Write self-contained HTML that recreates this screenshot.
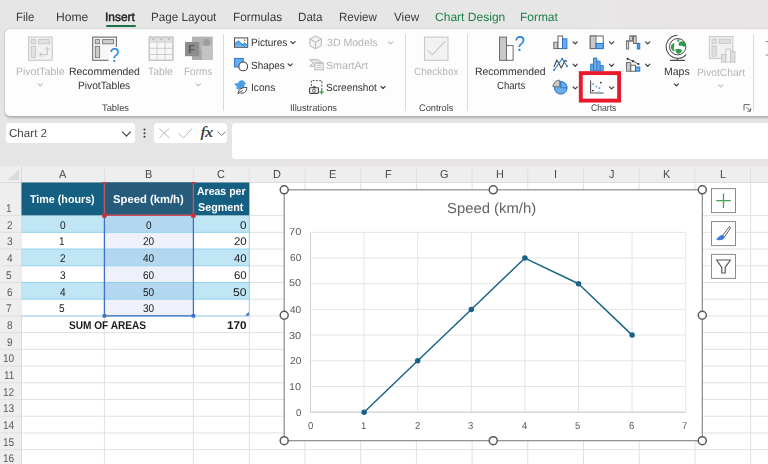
<!DOCTYPE html>
<html lang="en"><head><meta charset="utf-8"><title>Excel - Scatter chart</title>
<style>
html,body{margin:0;padding:0}
body{width:768px;height:464px;overflow:hidden;position:relative;background:linear-gradient(90deg,#e5e5e5 0,#e6e5e6 180px,#e8e4e6 330px,#e8e4e6 768px);font-family:"Liberation Sans",sans-serif}
.t{position:absolute;white-space:nowrap;line-height:1;transform-origin:0 50%;display:inline-block}
.abs{position:absolute}
#tabbar{left:0;top:0;width:768px;height:29px;background:linear-gradient(90deg,#e6e6e6 0,#e6e6e6 540px,#e8e5e6 640px,#e9e4e6 768px)}
#insul{left:105.5px;top:25px;width:30.5px;height:1.8px;background:#1e7145;border-radius:1px}
#ribbon{left:4.7px;top:28.5px;width:780px;height:87px;background:#fdfdfd;border-radius:5.5px;box-shadow:0 1.2px 2.5px rgba(0,0,0,.22),0 0 1.5px rgba(0,0,0,.12)}
.sep{position:absolute;top:34px;width:1px;height:77px;background:#dadada}
#namebox{left:5.5px;top:123px;width:129.5px;height:20.3px;background:#fff;border-radius:3.5px}
#fxbox{left:153.7px;top:123px;width:73.5px;height:20.3px;background:#fff;border-radius:3.5px}
#fbar{left:231.5px;top:123px;width:560px;height:36px;background:#fff;border-radius:4px}
#gfx{left:0;top:0;width:768px;height:464px}
svg{overflow:visible}
#texts{opacity:0.999}
#icons{opacity:0.999}

</style></head>
<body>
<div class="abs" id="tabbar"></div><div class="abs" id="insul"></div>
<div class="abs" id="ribbon"></div>
<div class="sep" style="left:223px"></div>
<div class="sep" style="left:405px"></div>
<div class="sep" style="left:467px"></div>
<div class="sep" style="left:753px"></div>
<div class="abs" id="namebox"></div><div class="abs" id="fxbox"></div><div class="abs" id="fbar"></div>
<svg class="abs" id="icons" style="left:0;top:0;width:768px;height:464px" viewBox="0 0 768 464" font-family="Liberation Sans, sans-serif">
<!-- PivotTable (disabled) -->
<g>
<rect x="28.6" y="37.1" width="23.6" height="23.2" fill="#f1f1f1" stroke="#c9c9c9" stroke-width="1.1"/>
<rect x="31.2" y="39.6" width="4.3" height="4.2" fill="#e2e2e2" stroke="#c6c6c6" stroke-width="0.9"/>
<rect x="38.6" y="39.6" width="11" height="4.2" fill="#e2e2e2" stroke="#c6c6c6" stroke-width="0.9"/>
<rect x="31.2" y="46.4" width="4.3" height="11.2" fill="#e2e2e2" stroke="#c6c6c6" stroke-width="0.9"/>
<path d="M47.3 47.6V54.6H39.6M45 49.8L47.3 47.4L49.6 49.8M41.8 52.4L39.4 54.6L41.8 56.8" fill="none" stroke="#c4c4c4" stroke-width="1"/>
</g>
<!-- Recommended PivotTables -->
<g>
<rect x="92.7" y="37.1" width="23.7" height="23.2" fill="#f6f6f6" stroke="#6b6b6b" stroke-width="1.1"/>
<rect x="95.3" y="39.6" width="4.3" height="4.2" fill="#cfcdcb" stroke="#777" stroke-width="0.9"/>
<rect x="102.6" y="39.6" width="11" height="4.2" fill="#cfcdcb" stroke="#777" stroke-width="0.9"/>
<rect x="95.3" y="46.4" width="4.3" height="11.2" fill="#cfcdcb" stroke="#777" stroke-width="0.9"/>
<rect x="108.6" y="47" width="11" height="16" fill="#fdfdfd"/>
<text transform="translate(109.4 62.3) scale(0.86 1)" font-size="20.5" fill="#2b88d8">?</text>
</g>
<!-- Table (disabled) -->
<g>
<rect x="149.3" y="37.1" width="23.6" height="23.2" fill="#f7f7f7" stroke="#c6c6c6" stroke-width="1.1"/>
<rect x="149.3" y="37.1" width="23.6" height="5" fill="#e6e6e6"/>
<path d="M151 38.3h4.4l-2.2 2.5zM158.9 38.3h4.4l-2.2 2.5zM166.8 38.3h4.4l-2.2 2.5z" fill="#bcbcbc"/>
<path d="M149.3 42.1H172.9M149.3 48.3H172.9M149.3 54.5H172.9M157 37.1V60.3M165.1 37.1V60.3" stroke="#cdcdcd" stroke-width="1" fill="none"/>
<rect x="149.3" y="37.1" width="23.6" height="23.2" fill="none" stroke="#c4c4c4" stroke-width="1.1"/>
</g>
<!-- Forms (disabled) -->
<g>
<rect x="192" y="36.6" width="20.7" height="23.4" fill="#b3b3b3"/>
<rect x="202" y="46" width="10.7" height="14" fill="#c3c3c3"/>
<rect x="192" y="50" width="10" height="10" fill="#a9a9a9"/>
<circle cx="206.6" cy="42.4" r="3.3" fill="#9c9c9c"/>
<rect x="185" y="42" width="14.2" height="14.2" fill="#8d8d8d"/>
<text x="188.3" y="53" font-size="10.5" font-weight="700" fill="#565656">F</text>
</g>
<!-- Pictures -->
<g>
<rect x="234.5" y="37.9" width="13.2" height="9.4" fill="#fff" stroke="#4a4a4a" stroke-width="1"/>
<path d="M235 46.8V43.2L238.3 40.6L242.6 44.4L244.6 42.8L247.2 45V46.8Z" fill="#62acef"/>
<path d="M235 43.4L238.3 40.8L244.8 46.6M242.4 44.4L244.6 42.8L247.2 45" fill="none" stroke="#2474c8" stroke-width="0.8"/>
<circle cx="244.7" cy="40.3" r="1" fill="#e8823a"/>
</g>
<!-- Shapes -->
<g>
<rect x="234.6" y="58.5" width="8.6" height="8.4" fill="#69aeee" stroke="#2b7cd3" stroke-width="1.1"/>
<circle cx="243.2" cy="66.4" r="4.4" fill="#fff" stroke="#444" stroke-width="1.1"/>
</g>
<!-- Icons -->
<g>
<path d="M234.3 83.2C236 83.6 237.6 83.4 238.6 82.2C239.4 80.6 241.4 79.8 243 80.6C244 81 244.6 82 244.6 82.6L246.6 83L244.8 84.2C244.8 87 242.6 89.4 239.4 89.4C237.4 89.4 236 88.4 235.6 87.6C236.6 87.4 237.2 87 237.4 86.4C235.6 86 234.6 84.8 234.3 83.2Z" fill="#4a9ee8"/>
<path d="M238.2 93.4C238.4 89.6 241.4 87.4 246.8 87.4C246.8 91.2 244.6 93.6 240.6 93.2M237.6 94L242.6 90.4" fill="#fff" stroke="#444" stroke-width="1" stroke-linejoin="round"/>
</g>
<!-- 3D Models (disabled) -->
<g fill="none" stroke="#b6b6b6" stroke-width="1" stroke-linejoin="round">
<path d="M315.6 35.9L321.3 39V45.7L315.6 48.8L309.9 45.7V39Z" fill="#f3f3f3"/>
<path d="M309.9 39L315.6 42.2L321.3 39M315.6 42.2V48.8"/>
</g>
<!-- SmartArt (disabled) -->
<g>
<path d="M309.8 59.6H317.8L322.8 63H316L313.4 66.4H309.8L312.8 63Z" fill="#e4e4e4" stroke="#b4b4b4" stroke-width="0.9" stroke-linejoin="round"/>
<rect x="314.8" y="63.2" width="8.4" height="6.6" fill="#f4f4f4" stroke="#b8b8b8" stroke-width="1"/>
<path d="M316.4 65.4H321.6M316.4 67.6H321.6" stroke="#c4c4c4" stroke-width="0.9"/>
</g>
<!-- Screenshot -->
<g>
<path d="M311.4 86V80.6H321.8V90.2" fill="none" stroke="#555" stroke-width="1" stroke-dasharray="2 1.3"/>
<rect x="309.6" y="87.8" width="8.8" height="5.6" rx="0.8" fill="#fff" stroke="#444" stroke-width="1.1"/>
<path d="M312.3 87.8L313 86.7H315.2L315.9 87.8" fill="#444" stroke="#444" stroke-width="0.8"/>
<circle cx="314" cy="90.6" r="1.5" fill="#fff" stroke="#444" stroke-width="0.9"/>
<path d="M321.6 90V94.4M319.4 92.2H323.8" stroke="#2ca24c" stroke-width="1.3"/>
</g>
<!-- Checkbox (disabled) -->
<g>
<rect x="424.5" y="37.1" width="23.5" height="23.2" fill="#f2f2f2" stroke="#c8c8c8" stroke-width="1.1"/>
<path d="M427.6 50.4L432.4 54.8L444.8 41.6" fill="none" stroke="#c4c4c4" stroke-width="1.1"/>
</g>
<!-- Recommended Charts -->
<g>
<rect x="499.5" y="37.1" width="7" height="23.2" fill="#cbc9c7" stroke="#6b6b6b" stroke-width="1"/>
<rect x="506.5" y="45.6" width="6.6" height="14.7" fill="#fff" stroke="#6b6b6b" stroke-width="1"/>
<text transform="translate(514.6 51.3) scale(0.86 1)" font-size="21.5" fill="#2b88d8">?</text>
</g>
<!-- Column chart -->
<g stroke-width="0.9">
<rect x="553.8" y="42.2" width="4.2" height="6.4" fill="#cbc9c7" stroke="#666"/>
<rect x="558" y="36" width="4.6" height="12.6" fill="#fff" stroke="#555"/>
<rect x="562.6" y="38.8" width="4.3" height="9.8" fill="#69aeeb" stroke="#1f6fc2"/>
</g>
<!-- Line chart -->
<g fill="none" stroke-linejoin="round">
<path d="M554 66.8L556.9 60L561.3 67.9L565.1 60.2L567 61.6" stroke="#444" stroke-width="1.1"/>
<path d="M554 70L562.2 58.8L567 66.2" stroke="#2b7cd3" stroke-width="1.1"/>
<circle cx="554" cy="70" r="1" fill="#2b7cd3"/><circle cx="562.2" cy="58.8" r="1" fill="#2b7cd3"/><circle cx="567" cy="66.2" r="1" fill="#2b7cd3"/>
</g>
<!-- Pie -->
<g>
<circle cx="560.8" cy="87.8" r="6.3" fill="#69aeeb" stroke="#1f6fc2" stroke-width="1"/>
<path d="M559.8 86.8H552.9A6.6 6.6 0 0 1 559.8 80.2Z" fill="#cbc9c7" stroke="#666" stroke-width="0.9" stroke-linejoin="round"/>
<path d="M560.8 81.5V87.8H567.1" fill="none" stroke="#1f6fc2" stroke-width="0.9"/>
</g>
<!-- Hierarchy -->
<g stroke-width="0.9">
<rect x="590.2" y="36" width="13" height="12.6" fill="#fff" stroke="#555"/>
<rect x="590.2" y="36" width="5.8" height="12.6" fill="#cbc9c7" stroke="#666"/>
<rect x="596" y="43.4" width="7.2" height="5.2" fill="#69aeeb" stroke="#1f6fc2"/>
</g>
<!-- Histogram -->
<g fill="#69aeeb" stroke="#1f6fc2" stroke-width="0.9">
<path d="M590.6 70.8V64.2H593.5V58.1H596.9V61.2H600.1V65.6H603.2V70.8Z"/>
<path d="M593.5 64.2V70.8M596.9 61.2V70.8M600.1 65.6V70.8" fill="none"/>
</g>
<!-- Scatter -->
<g>
<path d="M590.6 80.4V93H603.6" fill="none" stroke="#555" stroke-width="1.1"/>
<circle cx="600.8" cy="82.6" r="0.9" fill="#333"/>
<circle cx="592.8" cy="90.6" r="0.9" fill="#333"/>
<circle cx="593.2" cy="84.2" r="0.9" fill="#4a9be6"/>
<circle cx="596.4" cy="86.6" r="0.9" fill="#4a9be6"/>
<circle cx="599.4" cy="88.2" r="0.9" fill="#4a9be6"/>
<circle cx="598.6" cy="91.4" r="0.8" fill="#8ec3f2"/>
</g>
<!-- red highlight box -->
<rect x="580.8" y="73.1" width="38.3" height="27.5" fill="none" stroke="#e8192c" stroke-width="3.9"/>
<!-- Waterfall -->
<g stroke="#6a6a6a" stroke-width="0.9" fill="#d6d4d2">
<rect x="626.4" y="41" width="2.3" height="8"/>
<rect x="629.8" y="36" width="2.7" height="5"/>
<rect x="633.5" y="36" width="2.7" height="7.4"/>
<path d="M626.4 41H632.5M629.8 36H636.2M633.5 43.4H639" fill="none"/>
<rect x="637.3" y="43.4" width="2.5" height="5.6" fill="#4a9ee8" stroke="#1f6fc2"/>
</g>
<!-- Combo -->
<g stroke-width="0.9">
<rect x="626.4" y="62.6" width="4.4" height="8.6" fill="#cbc9c7" stroke="#666"/>
<rect x="630.8" y="65.2" width="4.6" height="6" fill="#fff" stroke="#555"/>
<rect x="635.4" y="67" width="4.4" height="4.2" fill="#69aeeb" stroke="#1f6fc2"/>
<path d="M627.6 58.8L633 61.2L638.4 64" fill="none" stroke="#444" stroke-width="0.9"/>
<circle cx="627.6" cy="58.8" r="1.1" fill="#333" stroke="none"/><circle cx="633" cy="61.2" r="1.1" fill="#333" stroke="none"/><circle cx="638.4" cy="64" r="1.1" fill="#333" stroke="none"/>
</g>
<!-- Maps globe -->
<g>
<circle cx="677.7" cy="46.7" r="8.2" fill="#fff" stroke="#4a4a4a" stroke-width="1"/>
<path d="M671.2 45.2L673 43.6L674.6 43.4L674.2 46L673.6 48.6L674.8 50.6L673.4 51.6L671.6 49.6L670.8 47.2ZM677 39.6L679.2 39.2L679.4 41.4L677.6 41.8ZM679 42.6L681.2 41.2L683.6 41.6L685.2 44L685.4 46.4L683.4 46.8L681.6 45.6L679.6 46L678.4 44.4ZM675.2 49.6L678.4 48.8L681.4 49.4L681.8 51.4L680 53.4L677.6 53.8L676 52.2Z" fill="#2e9b48"/>
<path d="M677.4 35.3A11.5 11.5 0 1 0 686.2 54.6" fill="none" stroke="#4a4a4a" stroke-width="1.05"/>
<path d="M677.4 58.2V60.4M670 60.4H685" stroke="#4a4a4a" stroke-width="1.1" fill="none"/>
</g>
<!-- PivotChart (disabled) -->
<g>
<rect x="709.4" y="36.6" width="23.4" height="22" fill="#f1f1f1" stroke="#c9c9c9" stroke-width="1.1"/>
<rect x="712" y="39.2" width="4.2" height="4.2" fill="#e0e0e0" stroke="#c6c6c6" stroke-width="0.9"/>
<rect x="719.2" y="39.2" width="11" height="4.2" fill="#e0e0e0" stroke="#c6c6c6" stroke-width="0.9"/>
<rect x="712" y="46" width="4.2" height="10.2" fill="#e0e0e0" stroke="#c6c6c6" stroke-width="0.9"/>
<rect x="721.4" y="54.4" width="4.6" height="7.8" fill="#e0e0e0" stroke="#c6c6c6" stroke-width="0.9"/>
<rect x="726" y="49" width="4.6" height="13.2" fill="#f4f4f4" stroke="#c6c6c6" stroke-width="0.9"/>
<rect x="730.6" y="51.4" width="4.4" height="10.8" fill="#e0e0e0" stroke="#c6c6c6" stroke-width="0.9"/>
</g>
<!-- chevrons -->
<g stroke="#bdbdbd" fill="none" stroke-width="1.2" stroke-linecap="round" stroke-linejoin="round">
<path d="M38.1 83.8L40.2 85.9L42.3 83.8"/><path d="M196.2 83.8L198.3 85.9L200.4 83.8"/><path d="M388.5 41.8L390.6 43.9L392.7 41.8"/><path d="M718.6 84.8L720.7 86.9L722.8 84.8"/>
</g>
<g stroke="#3d3d3d" fill="none" stroke-width="1.2" stroke-linecap="round" stroke-linejoin="round">
<path d="M290.9 41.6L293.0 43.7L295.1 41.6"/><path d="M288.1 63.8L290.2 65.9L292.3 63.8"/><path d="M380.9 86.4L383.0 88.5L385.1 86.4"/>
<path d="M573.1 41.8L575.2 43.9L577.3 41.8"/><path d="M573.1 64.2L575.2 66.3L577.3 64.2"/><path d="M573.1 86.8L575.2 88.9L577.3 86.8"/>
<path d="M609.5 41.8L611.6 43.9L613.7 41.8"/><path d="M609.5 64.2L611.6 66.3L613.7 64.2"/><path d="M609.5 86.8L611.6 88.9L613.7 86.8"/>
<path d="M645.6 41.8L647.7 43.9L649.8 41.8"/><path d="M645.6 64.2L647.7 66.3L649.8 64.2"/>
<path d="M674.3 83.8L676.4 85.9L678.5 83.8"/>
</g>
<!-- dialog launcher -->
<path d="M744 110.4V104.6H749.8M746.6 107.2L750.4 111M750.6 108V111.2H747.4" fill="none" stroke="#555" stroke-width="0.9"/>
<!-- clipped icons at right edge -->
<path d="M765.6 41.6H768M765.6 55H768" stroke="#8a8a8a" stroke-width="1"/>
<!-- name box chevron, dots, fx area -->
<path d="M122.4 131.9L126.4 136.2L130.4 131.9" fill="none" stroke="#444" stroke-width="1.2" stroke-linecap="round" stroke-linejoin="round"/>
<circle cx="144.5" cy="129.6" r="1" fill="#3a3a3a"/><circle cx="144.5" cy="133.2" r="1" fill="#3a3a3a"/><circle cx="144.5" cy="136.8" r="1" fill="#3a3a3a"/>
<path d="M159.3 128.4L169.4 137.9M169.4 128.4L159.3 137.9" stroke="#b9b9b9" stroke-width="1" fill="none"/>
<path d="M178.4 133.4L183.6 137.8L192.2 128.4" stroke="#b9b9b9" stroke-width="1" fill="none"/>
<text x="200.4" y="137.4" font-family="Liberation Serif, serif" font-style="italic" font-weight="400" font-size="15.5" fill="#2a2a2a" stroke="#2a2a2a" stroke-width="0.2" textLength="12.6" lengthAdjust="spacingAndGlyphs">fx</text>
<path d="M217.8 131.8L221.6 135.6L225.4 131.8" fill="none" stroke="#777" stroke-width="1" stroke-linecap="round" stroke-linejoin="round"/>
</svg>

<svg class="abs" id="gfx" viewBox="0 0 768 464">
<rect x="0" y="166" width="768" height="298" fill="#fff"/>
<rect x="0" y="166" width="768" height="16.5" fill="#eeeeee"/>
<rect x="0" y="166" width="21.5" height="298" fill="#eeeeee"/>
<path d="M7.5 180 L19 180 L19 169.5 Z" fill="#dadada"/>
<path d="M104.4 182.5V464 M193.4 182.5V464 M249.3 182.5V464 M305 182.5V464 M360.7 182.5V464 M416.4 182.5V464 M472.1 182.5V464 M527.8 182.5V464 M583.5 182.5V464 M639.2 182.5V464 M694.9 182.5V464 M750.6 182.5V464 M21.5 215.60H768 M21.5 232.32H768 M21.5 249.04H768 M21.5 265.76H768 M21.5 282.48H768 M21.5 299.20H768 M21.5 315.92H768 M21.5 332.64H768 M21.5 349.36H768 M21.5 366.08H768 M21.5 382.80H768 M21.5 399.52H768 M21.5 416.24H768 M21.5 432.96H768 M21.5 449.68H768 M21.5 466.40H768" stroke="#e0e0e0" stroke-width="1" fill="none"/>
<path d="M21.5 168V182.5 M104.4 168V182.5 M193.4 168V182.5 M249.3 168V182.5 M305 168V182.5 M360.7 168V182.5 M416.4 168V182.5 M472.1 168V182.5 M527.8 168V182.5 M583.5 168V182.5 M639.2 168V182.5 M694.9 168V182.5 M750.6 168V182.5 M0 215.60H21.5 M0 232.32H21.5 M0 249.04H21.5 M0 265.76H21.5 M0 282.48H21.5 M0 299.20H21.5 M0 315.92H21.5 M0 332.64H21.5 M0 349.36H21.5 M0 366.08H21.5 M0 382.80H21.5 M0 399.52H21.5 M0 416.24H21.5 M0 432.96H21.5 M0 449.68H21.5 M0 466.40H21.5" stroke="#dcdcdc" stroke-width="0.8" fill="none"/>
<path d="M0 182.5H768M21.5 166V464" stroke="#d4d4d4" stroke-width="0.8" fill="none"/>
<rect x="21.5" y="182.5" width="227.8" height="33.099999999999994" fill="#156082"/>
<rect x="104.4" y="182.5" width="89.0" height="33.099999999999994" fill="#265b7c"/>
<rect x="21.5" y="215.60" width="227.8" height="16.72" fill="#c0e6f5"/>
<rect x="104.4" y="215.60" width="89.0" height="16.72" fill="#b2d7ef"/>
<rect x="21.5" y="232.32" width="227.8" height="16.72" fill="#fff"/>
<rect x="104.4" y="232.32" width="89.0" height="16.72" fill="#eef0fa"/>
<rect x="21.5" y="249.04" width="227.8" height="16.72" fill="#c0e6f5"/>
<rect x="104.4" y="249.04" width="89.0" height="16.72" fill="#b2d7ef"/>
<rect x="21.5" y="265.76" width="227.8" height="16.72" fill="#fff"/>
<rect x="104.4" y="265.76" width="89.0" height="16.72" fill="#eef0fa"/>
<rect x="21.5" y="282.48" width="227.8" height="16.72" fill="#c0e6f5"/>
<rect x="104.4" y="282.48" width="89.0" height="16.72" fill="#b2d7ef"/>
<rect x="21.5" y="299.20" width="227.8" height="16.72" fill="#fff"/>
<rect x="104.4" y="299.20" width="89.0" height="16.72" fill="#eef0fa"/>
<path d="M21.5 232.32H249.3 M21.5 249.04H249.3 M21.5 265.76H249.3 M21.5 282.48H249.3 M21.5 299.20H249.3 M21.5 315.92H249.3 M249.3 215.6V315.92" stroke="#8fd0ee" stroke-width="1" fill="none"/>
<path d="M104.4 215.6V315.92H193.4V215.6" stroke="#3f6fc6" stroke-width="1.3" fill="none"/>
<path d="M104.4 182.5V215.29999999999998H193.4V182.5" stroke="#c9525d" stroke-width="1.4" fill="none"/>
<rect x="102.2" y="213.29999999999998" width="4.4" height="4.4" fill="#c4303c"/>
<rect x="102.4" y="182" width="4" height="1.6" fill="#c4303c"/>
<rect x="102.60000000000001" y="314.12" width="3.6" height="3.6" fill="#3f6fc6"/>
<rect x="191.20000000000002" y="213.29999999999998" width="4.4" height="4.4" fill="#c4303c"/>
<rect x="191.4" y="182" width="4" height="1.6" fill="#c4303c"/>
<rect x="191.6" y="314.12" width="3.6" height="3.6" fill="#3f6fc6"/>
<path d="M248.8 311.92V315.42H245.3Z" fill="#2a5caa"/>
<rect x="284.2" y="189.8" width="418.09999999999997" height="250.89999999999998" fill="#fff" stroke="#8a8a8a" stroke-width="1.2"/>
<path d="M310.50 232.35V412.18 M310.5 232.35H685.70 M364.10 232.35V412.18 M310.5 258.04H685.70 M417.70 232.35V412.18 M310.5 283.73H685.70 M471.30 232.35V412.18 M310.5 309.42H685.70 M524.90 232.35V412.18 M310.5 335.11H685.70 M578.50 232.35V412.18 M310.5 360.80H685.70 M632.10 232.35V412.18 M310.5 386.49H685.70 M685.70 232.35V412.18 M310.5 412.18H685.70" stroke="#e4e4e4" stroke-width="1" fill="none"/>
<path d="M310.5 232.35V412.18H685.70" stroke="#cfcfcf" stroke-width="1" fill="none"/>
<polyline points="364.10,412.18 417.70,360.80 471.30,309.42 524.90,258.04 578.50,283.73 632.10,335.11" fill="none" stroke="#186285" stroke-width="1.45" stroke-linejoin="round"/>
<circle cx="364.10" cy="412.18" r="2.75" fill="#186285"/>
<circle cx="417.70" cy="360.80" r="2.75" fill="#186285"/>
<circle cx="471.30" cy="309.42" r="2.75" fill="#186285"/>
<circle cx="524.90" cy="258.04" r="2.75" fill="#186285"/>
<circle cx="578.50" cy="283.73" r="2.75" fill="#186285"/>
<circle cx="632.10" cy="335.11" r="2.75" fill="#186285"/>
<circle cx="284.20" cy="189.80" r="4" fill="#fff" stroke="#595959" stroke-width="1.5"/>
<circle cx="493.25" cy="189.80" r="4" fill="#fff" stroke="#595959" stroke-width="1.5"/>
<circle cx="702.30" cy="189.80" r="4" fill="#fff" stroke="#595959" stroke-width="1.5"/>
<circle cx="284.20" cy="315.25" r="4" fill="#fff" stroke="#595959" stroke-width="1.5"/>
<circle cx="702.30" cy="315.25" r="4" fill="#fff" stroke="#595959" stroke-width="1.5"/>
<circle cx="284.20" cy="440.70" r="4" fill="#fff" stroke="#595959" stroke-width="1.5"/>
<circle cx="493.25" cy="440.70" r="4" fill="#fff" stroke="#595959" stroke-width="1.5"/>
<circle cx="702.30" cy="440.70" r="4" fill="#fff" stroke="#595959" stroke-width="1.5"/>
<rect x="711.5" y="188.6" width="24" height="24" fill="#fff" stroke="#8c8c8c" stroke-width="1"/>
<rect x="711.5" y="221.6" width="24" height="24" fill="#fff" stroke="#8c8c8c" stroke-width="1"/>
<rect x="711.5" y="254.4" width="24" height="24" fill="#fff" stroke="#8c8c8c" stroke-width="1"/>
<path d="M723.5 193.5V208M716.2 200.7H730.8" stroke="#3fa45a" stroke-width="1.3" fill="none"/>
<path d="M729.3 226.6 L722.6 235.4 L724.6 237 L730.6 227.8 Z" fill="#f4f4f4" stroke="#555" stroke-width="0.9" stroke-linejoin="round"/>
<path d="M722.2 235 C719.5 235 718.8 237.5 716 239.2 C719 241 723.8 240.6 724.8 237 Z" fill="#3b7dd8"/>
<path d="M716.5 260 H730.5 L725.2 267.3 V273 H721.8 V267.3 Z" fill="none" stroke="#555" stroke-width="1.2" stroke-linejoin="round"/>
</svg>
<div id="texts">
<span class="t" id="t0" style="left:16.06px;top:11px;font-size:12px;color:#3a3a3a;transform:rotate(0.03deg) scaleX(0.9444);">File</span>
<span class="t" id="t1" style="left:55.99px;top:11px;font-size:12px;color:#3a3a3a;transform:rotate(0.03deg) scaleX(1.0075);">Home</span>
<span class="t" id="t2" style="left:104.71px;top:11px;font-size:12px;color:#1f1f1f;transform:rotate(0.03deg) scaleX(0.9950);-webkit-text-stroke:0.45px #1f1f1f;">Insert</span>
<span class="t" id="t3" style="left:151.23px;top:11px;font-size:12px;color:#3a3a3a;transform:rotate(0.03deg) scaleX(0.9697);">Page Layout</span>
<span class="t" id="t4" style="left:232.52px;top:11px;font-size:12px;color:#3a3a3a;transform:rotate(0.03deg) scaleX(0.9823);">Formulas</span>
<span class="t" id="t5" style="left:297.78px;top:11px;font-size:12px;color:#3a3a3a;transform:rotate(0.03deg) scaleX(0.9694);">Data</span>
<span class="t" id="t6" style="left:339.04px;top:11px;font-size:12px;color:#3a3a3a;transform:rotate(0.03deg) scaleX(0.9613);">Review</span>
<span class="t" id="t7" style="left:393.88px;top:11px;font-size:12px;color:#3a3a3a;transform:rotate(0.03deg) scaleX(0.9724);">View</span>
<span class="t" id="t8" style="left:434.75px;top:11px;font-size:12px;color:#1b7f47;transform:rotate(0.03deg) scaleX(1.0037);">Chart Design</span>
<span class="t" id="t9" style="left:520.01px;top:11px;font-size:12px;color:#1b7f47;transform:rotate(0.03deg) scaleX(0.9940);">Format</span>
<span class="t" id="t10" style="left:16.00px;top:66px;font-size:10.5px;color:#b4b4b4;transform:rotate(0.03deg) scaleX(1.0010);">PivotTable</span>
<span class="t" id="t11" style="left:68.50px;top:66px;font-size:10.5px;color:#333;transform:rotate(0.03deg) scaleX(0.9958);">Recommended</span>
<span class="t" id="t12" style="left:78.03px;top:80px;font-size:10.5px;color:#333;transform:rotate(0.03deg) scaleX(0.9722);">PivotTables</span>
<span class="t" id="t13" style="left:147.85px;top:66px;font-size:10.5px;color:#b4b4b4;transform:rotate(0.03deg) scaleX(0.9907);">Table</span>
<span class="t" id="t14" style="left:184.05px;top:66px;font-size:10.5px;color:#b4b4b4;transform:rotate(0.03deg) scaleX(0.9491);">Forms</span>
<span class="t" id="t15" style="left:250.94px;top:37px;font-size:10.5px;color:#333;transform:rotate(0.03deg) scaleX(0.9573);">Pictures</span>
<span class="t" id="t16" style="left:250.92px;top:60px;font-size:10.5px;color:#333;transform:rotate(0.03deg) scaleX(0.9465);">Shapes</span>
<span class="t" id="t17" style="left:250.90px;top:82px;font-size:10.5px;color:#333;transform:rotate(0.03deg) scaleX(0.9688);">Icons</span>
<span class="t" id="t18" style="left:326.63px;top:37px;font-size:10.5px;color:#b4b4b4;transform:rotate(0.03deg) scaleX(1.0065);">3D Models</span>
<span class="t" id="t19" style="left:325.84px;top:60px;font-size:10.5px;color:#b4b4b4;transform:rotate(0.03deg) scaleX(1.0160);">SmartArt</span>
<span class="t" id="t20" style="left:325.90px;top:82px;font-size:10.5px;color:#333;transform:rotate(0.03deg) scaleX(0.9567);">Screenshot</span>
<span class="t" id="t21" style="left:413.76px;top:66px;font-size:10.5px;color:#b4b4b4;transform:rotate(0.03deg) scaleX(0.9528);">Checkbox</span>
<span class="t" id="t22" style="left:475.26px;top:66px;font-size:10.5px;color:#333;transform:rotate(0.03deg) scaleX(0.9923);">Recommended</span>
<span class="t" id="t23" style="left:496.77px;top:80px;font-size:10.5px;color:#333;transform:rotate(0.03deg) scaleX(0.9142);">Charts</span>
<span class="t" id="t24" style="left:663.60px;top:66px;font-size:10.5px;color:#333;transform:rotate(0.03deg) scaleX(1.0014);">Maps</span>
<span class="t" id="t25" style="left:696.82px;top:67px;font-size:10.5px;color:#b4b4b4;transform:rotate(0.03deg) scaleX(0.9789);">PivotChart</span>
<span class="t" id="t26" style="left:101.61px;top:103px;font-size:9.5px;color:#444;transform:rotate(0.03deg) scaleX(0.9840);">Tables</span>
<span class="t" id="t27" style="left:290.15px;top:103px;font-size:9.5px;color:#444;transform:rotate(0.03deg) scaleX(0.9783);">Illustrations</span>
<span class="t" id="t28" style="left:418.57px;top:103px;font-size:9.5px;color:#444;transform:rotate(0.03deg) scaleX(0.9739);">Controls</span>
<span class="t" id="t29" style="left:590.69px;top:103px;font-size:9.5px;color:#444;transform:rotate(0.03deg) scaleX(0.9076);">Charts</span>
<span class="t" id="t30" style="left:9.00px;top:127px;font-size:11.6px;color:#444;transform:rotate(0.03deg) scaleX(1.0001);">Chart 2</span>
<span class="t" id="t31" style="left:59.25px;top:169px;font-size:11.5px;color:#4a4a4a;transform:rotate(0.03deg) scaleX(0.9500);">A</span>
<span class="t" id="t32" style="left:144.70px;top:169px;font-size:11.5px;color:#4a4a4a;transform:rotate(0.03deg) scaleX(0.9500);">B</span>
<span class="t" id="t33" style="left:217.42px;top:169px;font-size:11.5px;color:#4a4a4a;transform:rotate(0.03deg) scaleX(0.9500);">C</span>
<span class="t" id="t34" style="left:272.94px;top:169px;font-size:11.5px;color:#4a4a4a;transform:rotate(0.03deg) scaleX(0.9500);">D</span>
<span class="t" id="t35" style="left:329.10px;top:169px;font-size:11.5px;color:#4a4a4a;transform:rotate(0.03deg) scaleX(0.9500);">E</span>
<span class="t" id="t36" style="left:384.84px;top:169px;font-size:11.5px;color:#4a4a4a;transform:rotate(0.03deg) scaleX(0.9500);">F</span>
<span class="t" id="t37" style="left:440.37px;top:169px;font-size:11.5px;color:#4a4a4a;transform:rotate(0.03deg) scaleX(0.9500);">G</span>
<span class="t" id="t38" style="left:495.82px;top:169px;font-size:11.5px;color:#4a4a4a;transform:rotate(0.03deg) scaleX(0.9500);">H</span>
<span class="t" id="t39" style="left:554.28px;top:169px;font-size:11.5px;color:#4a4a4a;transform:rotate(0.03deg) scaleX(0.9500);">I</span>
<span class="t" id="t40" style="left:608.97px;top:169px;font-size:11.5px;color:#4a4a4a;transform:rotate(0.03deg) scaleX(0.9500);">J</span>
<span class="t" id="t41" style="left:663.30px;top:169px;font-size:11.5px;color:#4a4a4a;transform:rotate(0.03deg) scaleX(0.9500);">K</span>
<span class="t" id="t42" style="left:719.50px;top:169px;font-size:11.5px;color:#4a4a4a;transform:rotate(0.03deg) scaleX(0.9500);">L</span>
<span class="t" id="t43" style="left:6.65px;top:220px;font-size:11.2px;color:#5a5a5a;transform:rotate(0.03deg) scaleX(0.9000);">2</span>
<span class="t" id="t44" style="left:6.62px;top:236px;font-size:11.2px;color:#5a5a5a;transform:rotate(0.03deg) scaleX(0.9000);">3</span>
<span class="t" id="t45" style="left:6.73px;top:253px;font-size:11.2px;color:#5a5a5a;transform:rotate(0.03deg) scaleX(0.9000);">4</span>
<span class="t" id="t46" style="left:6.28px;top:270px;font-size:11.2px;color:#5a5a5a;transform:rotate(0.03deg) scaleX(0.9000);">5</span>
<span class="t" id="t47" style="left:6.61px;top:287px;font-size:11.2px;color:#5a5a5a;transform:rotate(0.03deg) scaleX(0.9000);">6</span>
<span class="t" id="t48" style="left:6.31px;top:303px;font-size:11.2px;color:#5a5a5a;transform:rotate(0.03deg) scaleX(0.9000);">7</span>
<span class="t" id="t49" style="left:6.62px;top:320px;font-size:11.2px;color:#5a5a5a;transform:rotate(0.03deg) scaleX(0.9000);">8</span>
<span class="t" id="t50" style="left:6.61px;top:337px;font-size:11.2px;color:#5a5a5a;transform:rotate(0.03deg) scaleX(0.9000);">9</span>
<span class="t" id="t51" style="left:3.34px;top:353px;font-size:11.2px;color:#5a5a5a;transform:rotate(0.03deg) scaleX(0.9000);">10</span>
<span class="t" id="t52" style="left:3.79px;top:370px;font-size:11.2px;color:#5a5a5a;transform:rotate(0.03deg) scaleX(0.9000);">11</span>
<span class="t" id="t53" style="left:3.35px;top:387px;font-size:11.2px;color:#5a5a5a;transform:rotate(0.03deg) scaleX(0.9000);">12</span>
<span class="t" id="t54" style="left:3.33px;top:403px;font-size:11.2px;color:#5a5a5a;transform:rotate(0.03deg) scaleX(0.9000);">13</span>
<span class="t" id="t55" style="left:3.38px;top:420px;font-size:11.2px;color:#5a5a5a;transform:rotate(0.03deg) scaleX(0.9000);">14</span>
<span class="t" id="t56" style="left:3.34px;top:437px;font-size:11.2px;color:#5a5a5a;transform:rotate(0.03deg) scaleX(0.9000);">15</span>
<span class="t" id="t57" style="left:3.34px;top:453px;font-size:11.2px;color:#5a5a5a;transform:rotate(0.03deg) scaleX(0.9000);">16</span>
<span class="t" id="t58" style="left:6.40px;top:203px;font-size:11.2px;color:#5a5a5a;transform:rotate(0.03deg) scaleX(0.9000);">1</span>
<span class="t" id="t59" style="left:59.54px;top:220px;font-size:11.2px;color:#1c1c1c;transform:rotate(0.03deg) scaleX(0.9000);">0</span>
<span class="t" id="t60" style="left:145.74px;top:220px;font-size:11.2px;color:#1c1c1c;transform:rotate(0.03deg) scaleX(0.9000);">0</span>
<span class="t" id="t61" style="left:240.21px;top:220px;font-size:11.2px;color:#1c1c1c;transform:rotate(0.03deg) scaleX(1.0403);">0</span>
<span class="t" id="t62" style="left:59.20px;top:236px;font-size:11.2px;color:#1c1c1c;transform:rotate(0.03deg) scaleX(0.9000);">1</span>
<span class="t" id="t63" style="left:143.00px;top:236px;font-size:11.2px;color:#1c1c1c;transform:rotate(0.03deg) scaleX(0.9000);">20</span>
<span class="t" id="t64" style="left:234.14px;top:236px;font-size:11.2px;color:#1c1c1c;transform:rotate(0.03deg) scaleX(1.0237);">20</span>
<span class="t" id="t65" style="left:59.55px;top:253px;font-size:11.2px;color:#1c1c1c;transform:rotate(0.03deg) scaleX(0.9000);">2</span>
<span class="t" id="t66" style="left:143.06px;top:253px;font-size:11.2px;color:#1c1c1c;transform:rotate(0.03deg) scaleX(0.9000);">40</span>
<span class="t" id="t67" style="left:234.27px;top:253px;font-size:11.2px;color:#1c1c1c;transform:rotate(0.03deg) scaleX(1.0129);">40</span>
<span class="t" id="t68" style="left:59.52px;top:270px;font-size:11.2px;color:#1c1c1c;transform:rotate(0.03deg) scaleX(0.9000);">3</span>
<span class="t" id="t69" style="left:142.99px;top:270px;font-size:11.2px;color:#1c1c1c;transform:rotate(0.03deg) scaleX(0.9000);">60</span>
<span class="t" id="t70" style="left:234.13px;top:270px;font-size:11.2px;color:#1c1c1c;transform:rotate(0.03deg) scaleX(1.0248);">60</span>
<span class="t" id="t71" style="left:59.63px;top:287px;font-size:11.2px;color:#1c1c1c;transform:rotate(0.03deg) scaleX(0.9000);">4</span>
<span class="t" id="t72" style="left:142.66px;top:287px;font-size:11.2px;color:#1c1c1c;transform:rotate(0.03deg) scaleX(0.9000);">50</span>
<span class="t" id="t73" style="left:233.31px;top:287px;font-size:11.2px;color:#1c1c1c;transform:rotate(0.03deg) scaleX(1.0936);">50</span>
<span class="t" id="t74" style="left:59.18px;top:303px;font-size:11.2px;color:#1c1c1c;transform:rotate(0.03deg) scaleX(0.9000);">5</span>
<span class="t" id="t75" style="left:143.00px;top:303px;font-size:11.2px;color:#1c1c1c;transform:rotate(0.03deg) scaleX(0.9000);">30</span>
<span class="t" id="t76" style="left:68.80px;top:320px;font-size:11.2px;color:#1a1a1a;font-weight:700;transform:rotate(0.03deg) scaleX(0.9024);">SUM OF AREAS</span>
<span class="t" id="t77" style="left:227.45px;top:320px;font-size:11.2px;color:#1a1a1a;font-weight:700;transform:rotate(0.03deg) scaleX(1.0529);">170</span>
<span class="t" id="t78" style="left:30.28px;top:194px;font-size:11.4px;color:#fff;font-weight:700;transform:rotate(0.03deg) scaleX(0.9401);">Time (hours)</span>
<span class="t" id="t79" style="left:113.18px;top:194px;font-size:11.4px;color:#fff;font-weight:700;transform:rotate(0.03deg) scaleX(0.9890);">Speed (km/h)</span>
<span class="t" id="t80" style="left:196.83px;top:186px;font-size:11.4px;color:#fff;font-weight:700;transform:rotate(0.03deg) scaleX(0.9229);">Areas per</span>
<span class="t" id="t81" style="left:197.99px;top:202px;font-size:11.4px;color:#fff;font-weight:700;transform:rotate(0.03deg) scaleX(0.9440);">Segment</span>
<span class="t" id="t82" style="left:447.36px;top:201px;font-size:14.5px;color:#636363;transform:rotate(0.03deg) scaleX(1.0237);">Speed (km/h)</span>
<span class="t" id="t83" style="left:288.80px;top:227px;font-size:10px;color:#595959;transform:rotate(0.03deg) scaleX(1.1100);">70</span>
<span class="t" id="t84" style="left:289.85px;top:253px;font-size:10px;color:#595959;transform:rotate(0.03deg) scaleX(1.0134);">60</span>
<span class="t" id="t85" style="left:289.01px;top:278px;font-size:10px;color:#595959;transform:rotate(0.03deg) scaleX(1.0906);">50</span>
<span class="t" id="t86" style="left:289.92px;top:305px;font-size:10px;color:#595959;transform:rotate(0.03deg) scaleX(1.0072);">40</span>
<span class="t" id="t87" style="left:288.96px;top:331px;font-size:10px;color:#595959;transform:rotate(0.03deg) scaleX(1.0956);">30</span>
<span class="t" id="t88" style="left:289.85px;top:356px;font-size:10px;color:#595959;transform:rotate(0.03deg) scaleX(1.0134);">20</span>
<span class="t" id="t89" style="left:288.97px;top:382px;font-size:10px;color:#595959;transform:rotate(0.03deg) scaleX(1.0942);">10</span>
<span class="t" id="t90" style="left:295.62px;top:408px;font-size:10px;color:#595959;transform:rotate(0.03deg) scaleX(0.9500);">0</span>
<span class="t" id="t91" style="left:307.57px;top:421px;font-size:10px;color:#595959;transform:rotate(0.03deg) scaleX(0.9500);">0</span>
<span class="t" id="t92" style="left:360.75px;top:421px;font-size:10px;color:#595959;transform:rotate(0.03deg) scaleX(0.9500);">1</span>
<span class="t" id="t93" style="left:414.73px;top:421px;font-size:10px;color:#595959;transform:rotate(0.03deg) scaleX(0.9500);">2</span>
<span class="t" id="t94" style="left:467.94px;top:421px;font-size:10px;color:#595959;transform:rotate(0.03deg) scaleX(0.9500);">3</span>
<span class="t" id="t95" style="left:521.96px;top:421px;font-size:10px;color:#595959;transform:rotate(0.03deg) scaleX(0.9500);">4</span>
<span class="t" id="t96" style="left:575.18px;top:421px;font-size:10px;color:#595959;transform:rotate(0.03deg) scaleX(0.9500);">5</span>
<span class="t" id="t97" style="left:629.14px;top:421px;font-size:10px;color:#595959;transform:rotate(0.03deg) scaleX(0.9500);">6</span>
<span class="t" id="t98" style="left:682.31px;top:421px;font-size:10px;color:#595959;transform:rotate(0.03deg) scaleX(0.9500);">7</span>
</div>
</body></html>
